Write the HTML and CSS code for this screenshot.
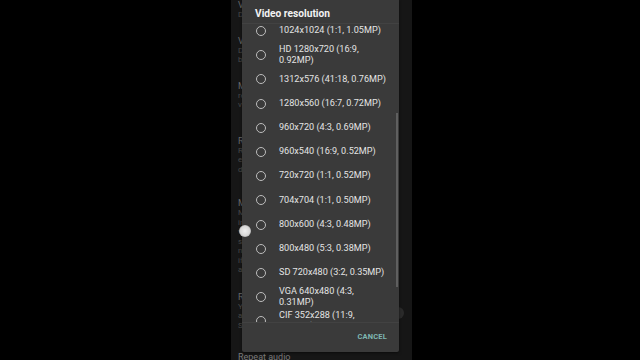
FILE: index.html
```html
<!DOCTYPE html>
<html>
<head>
<meta charset="utf-8">
<link rel="stylesheet" href="styles.css">
</head>
<body>
<div class="stage">
  <div class="phone">
    <div class="settings">
      <div class="pref p1"><div class="pt">Video bitrate</div><div class="ps">Default</div></div>
      <div class="pref p2"><div class="pt">Video frame rate</div><div class="ps">Default</div><div class="ps">bitrate may vary</div></div>
      <div class="pref p3"><div class="pt">Max duration of video</div><div class="ps">recording stops after</div><div class="ps">video max duration</div></div>
      <div class="pref p4"><div class="pt">Restart video after max duration</div><div class="ps">Restart video</div><div class="ps">each time the video</div><div class="ps">duration is reached</div></div>
      <div class="pref p5"><div class="pt">Max filesize of video</div><div class="ps">Max file size</div><div class="ps">in MB, for the</div><div class="ps">video recording</div><div class="ps">set to 0 for</div><div class="ps">no limit,</div><div class="ps">if reached</div><div class="ps">a new file</div></div>
      <div class="pref p6"><div class="pt">Record audio</div><div class="ps">Yes, record</div><div class="ps">audio when</div><div class="ps">Saving video</div></div>
      <div class="pref p7"><div class="pt">Repeat audio</div></div>
    </div>
    <div class="toggle-thumb"></div>

    <div class="dialog">
      <div class="dlg-title">Video resolution</div>
      <div class="dlg-list">
        <div class="dlg-inner">
          <div class="opt"><span class="radio"></span><span class="lbl">1024x1024 (1:1, 1.05MP)</span></div>
          <div class="opt"><span class="radio"></span><span class="lbl">HD 1280x720 (16:9, 0.92MP)</span></div>
          <div class="opt"><span class="radio"></span><span class="lbl">1312x576 (41:18, 0.76MP)</span></div>
          <div class="opt"><span class="radio"></span><span class="lbl">1280x560 (16:7, 0.72MP)</span></div>
          <div class="opt"><span class="radio"></span><span class="lbl">960x720 (4:3, 0.69MP)</span></div>
          <div class="opt"><span class="radio"></span><span class="lbl">960x540 (16:9, 0.52MP)</span></div>
          <div class="opt"><span class="radio"></span><span class="lbl">720x720 (1:1, 0.52MP)</span></div>
          <div class="opt"><span class="radio"></span><span class="lbl">704x704 (1:1, 0.50MP)</span></div>
          <div class="opt"><span class="radio"></span><span class="lbl">800x600 (4:3, 0.48MP)</span></div>
          <div class="opt"><span class="radio"></span><span class="lbl">800x480 (5:3, 0.38MP)</span></div>
          <div class="opt"><span class="radio"></span><span class="lbl">SD 720x480 (3:2, 0.35MP)</span></div>
          <div class="opt"><span class="radio"></span><span class="lbl">VGA 640x480 (4:3, 0.31MP)</span></div>
          <div class="opt"><span class="radio"></span><span class="lbl">CIF 352x288 (11:9, 0.10MP)</span></div>
        </div>
      </div>
      <div class="dlg-actions"><span class="btn">CANCEL</span></div>
      <div class="scrollbar"></div>
    </div>

    <div class="touch"></div>
  </div>
</div>
</body>
</html>
```

FILE: styles.css
```css
* { box-sizing: border-box; }
html, body { margin: 0; padding: 0; background: #000; }
body { width: 640px; height: 360px; overflow: hidden; font-family: Roboto, "Noto Sans", "Liberation Sans", sans-serif; }

.stage { width: 640px; height: 360px; background: #000; display: flex; }

.phone {
  position: relative;
  margin-left: 231px;
  width: 181px;
  height: 360px;
  background: #161616;
  overflow: hidden;
}

.settings { padding-left: 7px; display: flex; flex-direction: column; }
.pref { display: flex; flex-direction: column; white-space: nowrap; }
.pt { font-size: 9px; line-height: 10px; color: #6a6a6a; }
.ps { font-size: 8px; line-height: 9.5px; color: #4a4a4a; }
.p1 { margin-top: 0; }
.p2 { margin-top: 16px; }
.p3 { margin-top: 16px; }
.p4 { margin-top: 26px; }
.p5 { margin-top: 24px; }
.p6 { margin-top: 17px; }
.p7 { margin-top: 22px; }
.p7 .pt { color: #7a7a7a; }

.toggle-thumb {
  position: absolute;
  left: 161px; top: 307px;
  width: 12px; height: 12px;
  border-radius: 50%;
  background: #2a2a2a;
}

.dialog {
  position: absolute;
  left: 11px; top: 0;
  width: 157px; height: 352px;
  background: #3a3a3a;
  border-radius: 0 0 2px 2px;
  display: flex;
  flex-direction: column;
  box-shadow: 0 1px 3px rgba(0,0,0,0.5);
}

.dlg-title {
  height: 24px;
  padding: 8px 0 0 13px;
  font-size: 10.2px;
  line-height: 12px;
  font-weight: bold;
  color: #f2f2f2;
  border-bottom: 1px solid #424242;
}

.dlg-list { height: 298px; overflow: hidden; }
.dlg-inner { margin-top: -5px; }

.opt {
  height: 24.2px;
  display: flex;
  align-items: center;
  padding-left: 14px;
}
.radio {
  flex: none;
  width: 10px; height: 10px;
  border-radius: 50%;
  border: 1.4px solid #bdbdbd;
}
.lbl {
  margin-left: 13px;
  width: 110px;
  font-size: 9.1px;
  line-height: 11.5px;
  color: #e4e4e4;
}

.dlg-actions {
  flex: 1;
  border-top: 1px solid #424242;
  display: flex;
  justify-content: flex-end;
  align-items: center;
  padding: 0 12px 2px 0;
}
.btn {
  font-size: 7.5px;
  font-weight: bold;
  letter-spacing: 0.2px;
  color: #7fb7b2;
}

.scrollbar {
  position: absolute;
  right: 1px; top: 113px;
  width: 2px; height: 174px;
  background: #5f5f5f;
}

.touch {
  position: absolute;
  left: 8px; top: 225px;
  width: 12px; height: 12px;
  border-radius: 50%;
  background: radial-gradient(circle, #f0f0f0 0%, #d8d8d8 55%, rgba(200,200,200,0.4) 100%);
}
```
